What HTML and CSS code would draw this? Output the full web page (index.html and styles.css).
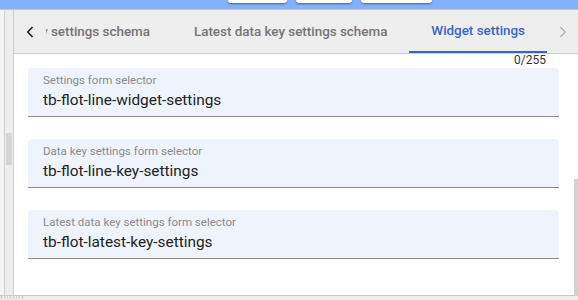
FILE: index.html
```html
<!DOCTYPE html>
<html lang="en">
<head>
    <meta charset="UTF-8">
    <meta name="viewport" content="width=device-width, initial-scale=1.0">
    <title>Widget settings</title>
    <link rel="stylesheet" href="styles.css">
</head>
<body>
    <div class="toolbar">
        <div class="tool-btn w1"></div>
        <div class="tool-btn w2"></div>
        <div class="tool-btn w3"></div>
    </div>

    <div class="main">
        <div class="gutter">
            <div class="gutter-edge"></div>
            <div class="gutter-bar">
                <div class="grip"></div>
            </div>
        </div>

        <div class="panel">
            <div class="tab-header">
                <div class="pager">
                    <svg width="8" height="12" viewBox="0 0 8 12"><path d="M6.5 1 L1.8 6 L6.5 11" fill="none" stroke="#222" stroke-width="1.6"/></svg>
                </div>
                <div class="tab-clip">
                    <div class="tab-list">
                        <div class="tab">Settings schema</div>
                        <div class="tab">Data key settings schema</div>
                        <div class="tab">Latest data key settings schema</div>
                        <div class="tab active">Widget settings</div>
                    </div>
                </div>
                <div class="pager right">
                    <svg width="8" height="12" viewBox="0 0 8 12"><path d="M1.5 1 L6.2 6 L1.5 11" fill="none" stroke="#b0b0b0" stroke-width="1.4"/></svg>
                </div>
            </div>

            <div class="body-row">
                <div class="content">
                    <div class="hint">0/255</div>

                    <div class="field">
                        <div class="field-label">Settings form selector</div>
                        <div class="field-value">tb-flot-line-widget-settings</div>
                    </div>

                    <div class="field">
                        <div class="field-label">Data key settings form selector</div>
                        <div class="field-value">tb-flot-line-key-settings</div>
                    </div>

                    <div class="field">
                        <div class="field-label">Latest data key settings form selector</div>
                        <div class="field-value">tb-flot-latest-key-settings</div>
                    </div>
                </div>
                <div class="scroll-track">
                    <div class="scroll-thumb"></div>
                </div>
            </div>
        </div>
    </div>

    <div class="statusbar">
        <div class="grip-h"></div>
    </div>
</body>
</html>
```

FILE: styles.css
```css
* {
    margin: 0;
    padding: 0;
    box-sizing: border-box;
}

body {
    font-family: Roboto, "Liberation Sans", sans-serif;
    width: 578px;
    height: 300px;
    overflow: hidden;
    display: flex;
    flex-direction: column;
    background: #fff;
}

.toolbar {
    height: 10px;
    background: #82b1ff;
    border-bottom: 1px solid #c8c8c8;
    display: flex;
    align-items: flex-start;
    padding-left: 228px;
    gap: 9px;
    flex-shrink: 0;
}

.tool-btn {
    height: 3px;
    background: #fff;
    border-radius: 0 0 3px 3px;
    box-shadow: 0 1px 2px rgba(0, 0, 0, 0.45);
}

.tool-btn.w1 { width: 59px; }
.tool-btn.w2 { width: 56px; }
.tool-btn.w3 { width: 71px; }

.main {
    flex: 1;
    display: flex;
    min-height: 0;
}

.gutter {
    width: 14px;
    display: flex;
    flex-shrink: 0;
}

.gutter-edge {
    width: 5px;
    background: #f4f4f4;
    border-right: 1px solid #cfcfcf;
}

.gutter-bar {
    width: 9px;
    background: #eeeeee;
    border-right: 1px solid #cfcfcf;
    padding-top: 123px;
}

.grip {
    width: 6px;
    height: 32px;
    margin-left: 1px;
    background-image: radial-gradient(circle, #d4d4d4 0.7px, transparent 0.9px);
    background-size: 2px 2px;
}

.panel {
    flex: 1;
    display: flex;
    flex-direction: column;
    min-width: 0;
}

.tab-header {
    height: 44px;
    background: #eeeeee;
    border-bottom: 1px solid #cccccc;
    display: flex;
    flex-shrink: 0;
}

.pager {
    width: 32px;
    display: flex;
    align-items: center;
    justify-content: center;
    flex-shrink: 0;
}

.pager.right {
    width: 31px;
    justify-content: flex-start;
    padding-left: 12px;
}

.tab-clip {
    flex: 1;
    overflow: hidden;
    display: flex;
    justify-content: flex-end;
}

.tab-list {
    display: flex;
    flex-shrink: 0;
}

.tab {
    flex-shrink: 0;
    padding: 0 22px;
    height: 43px;
    line-height: 43px;
    font-size: 13.4px;
    font-weight: 500;
    color: #757575;
    white-space: nowrap;
}

.tab.active {
    color: #3466c9;
    border-bottom: 2px solid #3466c9;
    line-height: 41px;
}

.body-row {
    flex: 1;
    display: flex;
    min-height: 0;
}

.content {
    flex: 1;
    padding: 0 15px 0 14px;
    overflow: hidden;
}

.hint {
    margin-bottom: 2px;
    height: 12px;
    line-height: 12px;
    font-size: 12px;
    color: #333;
    text-align: right;
    padding-right: 13px;
}

.field {
    height: 49px;
    background: #eff4fc;
    border-radius: 4px 4px 0 0;
    border-bottom: 1px solid #8c8c8c;
    padding: 5px 16px 0 15px;
    margin-bottom: 22px;
}

.field-label {
    font-size: 11.5px;
    line-height: 14px;
    color: #8a8a8a;
}

.field-value {
    margin-top: 3px;
    font-size: 15.4px;
    line-height: 20px;
    color: #222;
}

.scroll-track {
    width: 4px;
    flex-shrink: 0;
}

.scroll-thumb {
    margin-top: 125px;
    height: 116px;
    background: #d2d2d2;
}

.statusbar {
    height: 5px;
    background: #eeeeee;
    border-top: 1px solid #cccccc;
    flex-shrink: 0;
}

.grip-h {
    width: 23px;
    height: 3px;
    background-image: radial-gradient(circle, #c8c8c8 0.7px, transparent 0.9px);
    background-size: 3px 2px;
}
```
